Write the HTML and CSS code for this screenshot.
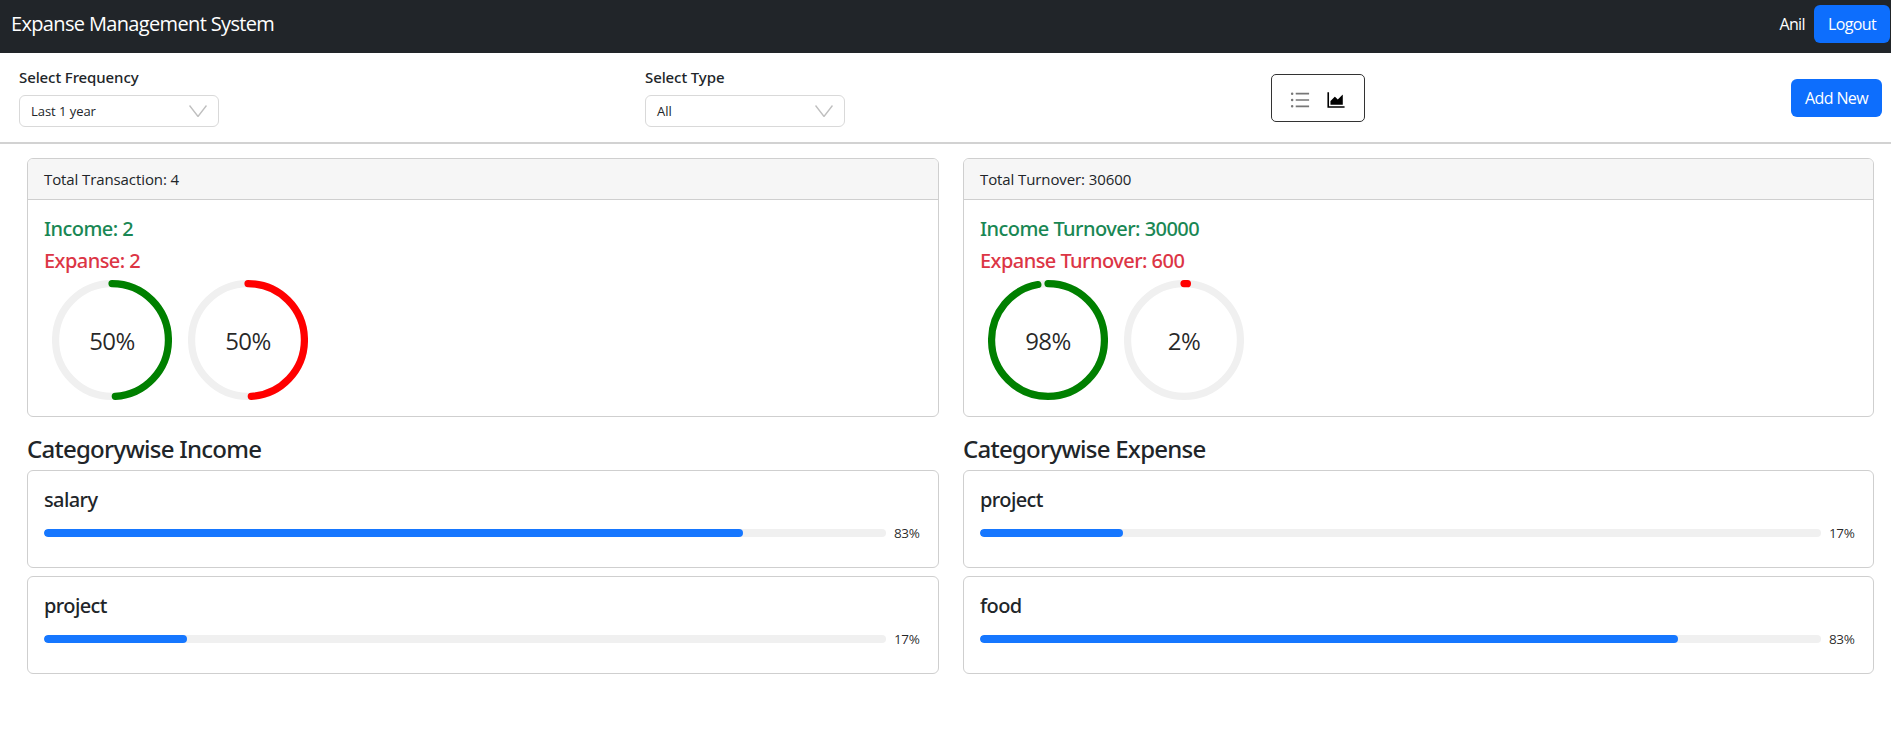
FILE: index.html
```html
<!DOCTYPE html>
<html lang="en">
<head>
<meta charset="utf-8">
<title>Expanse Management System</title>
<link rel="stylesheet" href="styles.css">
</head>
<body>
<nav class="navbar">
  <a class="brand">Expanse Management System</a>
  <div class="nav-user">
    <span class="user-name">Anil</span>
    <button class="btn btn-logout">Logout</button>
  </div>
</nav>

<section class="filters">
  <div class="filter filter-frequency">
    <label class="filter-label">Select Frequency</label>
    <div class="select"><span>Last 1 year</span>
      <svg class="chevron" viewBox="0 0 18 12"><path d="M.5 .5l8.5 11 8.5-11"/></svg>
    </div>
  </div>
  <div class="filter filter-type">
    <label class="filter-label">Select Type</label>
    <div class="select"><span>All</span>
      <svg class="chevron" viewBox="0 0 18 12"><path d="M.5 .5l8.5 11 8.5-11"/></svg>
    </div>
  </div>
  <div class="view-switch">
    <svg class="icon icon-list" viewBox="64 64 896 896"><path d="M912 192H328c-4.4 0-8 3.6-8 8v56c0 4.4 3.6 8 8 8h584c4.4 0 8-3.6 8-8v-56c0-4.4-3.6-8-8-8zm0 284H328c-4.4 0-8 3.6-8 8v56c0 4.4 3.6 8 8 8h584c4.4 0 8-3.6 8-8v-56c0-4.4-3.6-8-8-8zm0 284H328c-4.4 0-8 3.6-8 8v56c0 4.4 3.6 8 8 8h584c4.4 0 8-3.6 8-8v-56c0-4.4-3.6-8-8-8zM104 228a56 56 0 10112 0 56 56 0 10-112 0zm0 284a56 56 0 10112 0 56 56 0 10-112 0zm0 284a56 56 0 10112 0 56 56 0 10-112 0z"/></svg>
    <svg class="icon icon-chart" viewBox="64 64 896 896"><path d="M888 792H200V168c0-4.4-3.6-8-8-8h-56c-4.4 0-8 3.6-8 8v688c0 4.4 3.6 8 8 8h752c4.4 0 8-3.6 8-8v-56c0-4.4-3.6-8-8-8zm-616-64h536c4.4 0 8-3.6 8-8V284c0-7.2-8.7-10.7-13.7-5.7L592 488.6l-125.4-124a8.03 8.03 0 00-11.3 0l-189 189.6a7.87 7.87 0 00-2.3 5.6V720c0 4.4 3.6 8 8 8z"/></svg>
  </div>
  <button class="btn btn-add">Add New</button>
</section>

<main class="content">
  <div class="card">
    <div class="card-header">Total Transaction: 4</div>
    <div class="card-body">
      <h5 class="stat stat-income">Income: 2</h5>
      <h5 class="stat stat-expense">Expanse: 2</h5>
      <div class="rings">
        <div class="ring">
          <svg viewBox="0 0 100 100"><path class="ring-track" d="M50 3a47 47 0 1 1 0 94a47 47 0 1 1 0-94"/><path class="ring-green" stroke-dasharray="144.65 999" d="M50 3a47 47 0 1 1 0 94a47 47 0 1 1 0-94"/></svg>
          <span class="ring-text">50%</span>
        </div>
        <div class="ring">
          <svg viewBox="0 0 100 100"><path class="ring-track" d="M50 3a47 47 0 1 1 0 94a47 47 0 1 1 0-94"/><path class="ring-red" stroke-dasharray="144.65 999" d="M50 3a47 47 0 1 1 0 94a47 47 0 1 1 0-94"/></svg>
          <span class="ring-text">50%</span>
        </div>
      </div>
    </div>
  </div>
  <div class="card">
    <div class="card-header">Total Turnover: 30600</div>
    <div class="card-body">
      <h5 class="stat stat-income">Income Turnover: 30000</h5>
      <h5 class="stat stat-expense">Expanse Turnover: 600</h5>
      <div class="rings">
        <div class="ring">
          <svg viewBox="0 0 100 100"><path class="ring-track" d="M50 3a47 47 0 1 1 0 94a47 47 0 1 1 0-94"/><path class="ring-green" stroke-dasharray="286.4 999" d="M50 3a47 47 0 1 1 0 94a47 47 0 1 1 0-94"/></svg>
          <span class="ring-text">98%</span>
        </div>
        <div class="ring">
          <svg viewBox="0 0 100 100"><path class="ring-track" d="M50 3a47 47 0 1 1 0 94a47 47 0 1 1 0-94"/><path class="ring-red" stroke-dasharray="2.9 999" d="M50 3a47 47 0 1 1 0 94a47 47 0 1 1 0-94"/></svg>
          <span class="ring-text">2%</span>
        </div>
      </div>
    </div>
  </div>

  <div class="category-col">
    <h4 class="category-title">Categorywise Income</h4>
    <div class="cat-card">
      <h5 class="cat-name">salary</h5>
      <div class="progress"><div class="track"><div class="fill" style="width:83%"></div></div><span class="pct">83%</span></div>
    </div>
    <div class="cat-card">
      <h5 class="cat-name">project</h5>
      <div class="progress"><div class="track"><div class="fill" style="width:17%"></div></div><span class="pct">17%</span></div>
    </div>
  </div>
  <div class="category-col">
    <h4 class="category-title">Categorywise Expense</h4>
    <div class="cat-card">
      <h5 class="cat-name">project</h5>
      <div class="progress"><div class="track"><div class="fill" style="width:17%"></div></div><span class="pct">17%</span></div>
    </div>
    <div class="cat-card">
      <h5 class="cat-name">food</h5>
      <div class="progress"><div class="track"><div class="fill" style="width:83%"></div></div><span class="pct">83%</span></div>
    </div>
  </div>
</main>
</body>
</html>
```
FILE: styles.css
```css
* { box-sizing: border-box; }
html, body { margin: 0; }
body {
  font-family: "Open Sans", "Noto Sans", "Liberation Sans", sans-serif;
  font-size: 16px;
  color: #212529;
  background: #fff;
}
.navbar {
  height: 53px;
  background: #212529;
  display: flex;
  align-items: flex-start;
  justify-content: space-between;
  padding: 5px 1px 0 11px;
}
.brand { color: #fff; font-size: 20px; line-height: 38px; letter-spacing: -0.65px; }
.nav-user { display: flex; align-items: center; gap: 9px; }
.user-name { color: #fff; font-size: 16px; letter-spacing: -0.6px; }
.btn {
  background: #0d6efd;
  color: #fff;
  border: 0;
  border-radius: 6px;
  font: inherit;
  font-size: 16px;
  letter-spacing: -0.6px;
  height: 38px;
}
.btn-logout { width: 76px; }
.btn-add { width: 91px; }
.filters {
  height: 91px;
  border-bottom: 2px solid #d2d2d2;
  display: flex;
  align-items: flex-start;
  padding: 15px 9px 0 19px;
}
.filter { width: 200px; }
.filter-frequency { margin-right: 426px; }
.filter-type { margin-right: 426px; }
.filter-label {
  display: block;
  font-family: "Noto Sans", "Open Sans", sans-serif;
  font-size: 15px;
  font-weight: 500;
  letter-spacing: -0.1px;
  line-height: 19px;
  margin-bottom: 8px;
}
.select {
  height: 32px;
  border: 1px solid #d9d9d9;
  border-radius: 6px;
  display: flex;
  align-items: center;
  justify-content: space-between;
  padding: 0 11px;
  font-size: 13px;
  letter-spacing: -0.05px;
}
.chevron { width: 18px; height: 12px; fill: none; stroke: #bfbfbf; stroke-width: 1.4; }
.view-switch {
  width: 94px;
  height: 48px;
  margin-top: 6px;
  padding-top: 3px;
  border: 1px solid #333;
  border-radius: 5px;
  display: flex;
  align-items: center;
  justify-content: center;
  gap: 16px;
}
.icon { width: 20px; height: 20px; }
.icon-list { fill: #777; }
.icon-chart { fill: #000; }
.btn-add { margin-left: auto; margin-top: 11px; }
.content {
  display: grid;
  grid-template-columns: 912px 911px;
  column-gap: 24px;
  padding: 14px 0 0 27px;
}
.card {
  height: 259px;
  border: 1px solid #cfcfcf;
  border-radius: 6px;
  overflow: hidden;
}
.card-header {
  height: 41px;
  background: #f6f6f6;
  border-bottom: 1px solid #cfcfcf;
  padding: 0 16px;
  display: flex;
  align-items: center;
  font-size: 15px;
  letter-spacing: -0.1px;
}
.card-body { padding: 17px 16px 0; }
.stat {
  margin: 0 0 8px;
  font-family: "Noto Sans", "Open Sans", sans-serif;
  font-size: 20px;
  font-weight: 500;
  line-height: 24px;
  letter-spacing: -0.55px;
}
.stat-income { color: #198754; }
.stat-expense { color: #dc3545; }
.rings { display: flex; gap: 16px; padding-left: 8px; margin-top: -1px; }
.ring { position: relative; width: 120px; height: 120px; }
.ring svg { display: block; width: 120px; height: 120px; fill: none; stroke-width: 6; stroke-linecap: round; }
.ring-track { stroke: #f0f0f0; }
.ring-green { stroke: #008000; }
.ring-red { stroke: #ff0000; }
.ring-text {
  position: absolute;
  inset: 0;
  display: flex;
  align-items: center;
  justify-content: center;
  font-size: 24px;
  letter-spacing: -0.6px;
  color: rgba(0,0,0,.85);
}
.category-title {
  margin: 17px 0 7px;
  font-family: "Noto Sans", "Open Sans", sans-serif;
  font-size: 24px;
  font-weight: 500;
  line-height: 29px;
  letter-spacing: -0.74px;
}
.cat-card {
  height: 98px;
  border: 1px solid #cfcfcf;
  border-radius: 6px;
  padding: 17px 16px 0;
  margin-bottom: 8px;
}
.cat-name {
  margin: 0 0 12px;
  font-family: "Noto Sans", "Open Sans", sans-serif;
  font-size: 20px;
  font-weight: 500;
  line-height: 24px;
  letter-spacing: -0.6px;
}
.progress { display: flex; align-items: center; gap: 8px; }
.track { flex: 1; height: 8px; background: #f0f0f0; border-radius: 4px; overflow: hidden; }
.fill { height: 100%; background: #1677ff; border-radius: 4px; }
.pct { width: 28px; font-size: 13.5px; letter-spacing: -0.4px; white-space: nowrap; color: rgba(0,0,0,.85); }
```
